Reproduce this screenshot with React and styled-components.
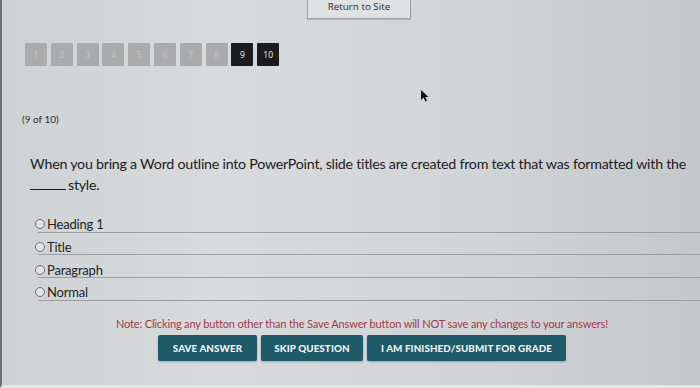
import React from "react"
import styled, { createGlobalStyle } from "styled-components"

const GlobalStyle = createGlobalStyle`
  html, body {
    margin: 0;
    padding: 0;
    height: 100%;
  }
  body {
    font-family: Lato, "Open Sans", sans-serif;
    color: #1e1f22;
  }
`

const Page = styled.div`
  box-sizing: border-box;
  width: 700px;
  height: 388px;
  overflow: hidden;
  position: relative;
  background: linear-gradient(90deg, #cfd2d4 0%, #d8dadc 30%, #d3d6d8 65%, #c4c8cb 100%);
  border-left: 2px solid #6e7276;
  border-bottom: 3px solid #e4e6e6;
`

const TopBar = styled.div`
  display: flex;
  padding-left: 305px;
`

const ReturnButton = styled.button`
  box-sizing: border-box;
  width: 104px;
  height: 19px;
  border: 1px solid #9ea3a7;
  border-top: none;
  background: #dfe1e2;
  font-family: "Open Sans", sans-serif;
  font-size: 9.8px;
  color: #2a2b2e;
  padding: 0 0 7px;
  box-shadow: 0 1px 1px rgba(0, 0, 0, 0.15);
`

const Pager = styled.div`
  display: flex;
  gap: 3.8px;
  padding: 24px 0 0 23px;
`

const PageBox = styled.div`
  width: 22px;
  height: 23px;
  display: flex;
  align-items: center;
  justify-content: center;
  font-family: "Open Sans", sans-serif;
  font-size: 8.5px;
  color: ${p => (p.$active ? "#f2f2f2" : "#c3c5c6")};
  background: ${p => (p.$active ? "#1b1c1f" : "#a9abad")};
  border-radius: 1px;
`

const Counter = styled.div`
  padding: 47px 0 0 20px;
  font-size: 10px;
  color: #2c2d30;
`

const Question = styled.div`
  padding: 28px 0 0 28px;
  font-size: 14.25px;
  line-height: 21px;
  letter-spacing: -0.25px;
  color: #1b1c1f;
`

const Blank = styled.span`
  display: inline-block;
  width: 36px;
  border-bottom: 1px solid #1b1c1f;
  margin-right: 2px;
`

const Options = styled.div`
  display: flex;
  flex-direction: column;
  padding: 15px 0 0 34px;
`

const Option = styled.label`
  display: flex;
  align-items: center;
  gap: 2px;
  height: 22.7px;
  padding-top: 7px;
  line-height: 14px;
  box-sizing: border-box;
  border-bottom: 1.5px solid #9b9fa3;
  margin-left: 2px;
  font-size: 13px;
  color: #1e1f22;
  letter-spacing: -0.2px;
`

const Radio = styled.span`
  width: 8px;
  height: 8px;
  border: 1px solid #6d7175;
  border-radius: 50%;
  margin-left: -3px;
  background: #e2e4e5;
`

const Footer = styled.div`
  display: flex;
  flex-direction: column;
  align-items: center;
  padding: 16px 0 0 22px;
`

const Note = styled.div`
  font-size: 11px;
  color: #a2394a;
  letter-spacing: -0.15px;
`

const ButtonRow = styled.div`
  display: flex;
  gap: 4px;
  margin-top: 5px;
`

const ActionButton = styled.button`
  height: 26px;
  width: ${p => p.$w}px;
  border: none;
  border-radius: 2px;
  background: #1e5a68;
  color: #eef3f4;
  font-family: Lato, sans-serif;
  font-weight: 900;
  font-size: 9.8px;
  letter-spacing: 0.1px;
  text-transform: uppercase;
  box-shadow: 0 1px 2px rgba(0, 0, 0, 0.25);
`

const Cursor = styled.svg`
  position: absolute;
  left: 419px;
  top: 90px;
`

const options = ["Heading 1", "Title", "Paragraph", "Normal"]

const App = () => (
  <>
    <GlobalStyle />
    <Page>
      <TopBar>
        <ReturnButton>Return to Site</ReturnButton>
      </TopBar>
      <Pager>
        {[1, 2, 3, 4, 5, 6, 7, 8, 9, 10].map(n => (
          <PageBox key={n} $active={n >= 9}>
            {n}
          </PageBox>
        ))}
      </Pager>
      <Counter>(9 of 10)</Counter>
      <Question>
        When you bring a Word outline into PowerPoint, slide titles are created from text that was formatted with the
        <br />
        <Blank />
        style.
      </Question>
      <Options>
        {options.map(o => (
          <Option key={o}>
            <Radio />
            {o}
          </Option>
        ))}
      </Options>
      <Footer>
        <Note>Note: Clicking any button other than the Save Answer button will NOT save any changes to your answers!</Note>
        <ButtonRow>
          <ActionButton $w={99}>Save Answer</ActionButton>
          <ActionButton $w={102}>Skip Question</ActionButton>
          <ActionButton $w={199}>I am finished/submit for grade</ActionButton>
        </ButtonRow>
      </Footer>
      <Cursor width="9" height="12" viewBox="0 0 9 12">
        <path d="M0 0 L0 10 L2.5 7.5 L4.5 11.5 L6 10.8 L4.2 7 L7.5 7 Z" fill="#111" />
      </Cursor>
    </Page>
  </>
)

export default App
